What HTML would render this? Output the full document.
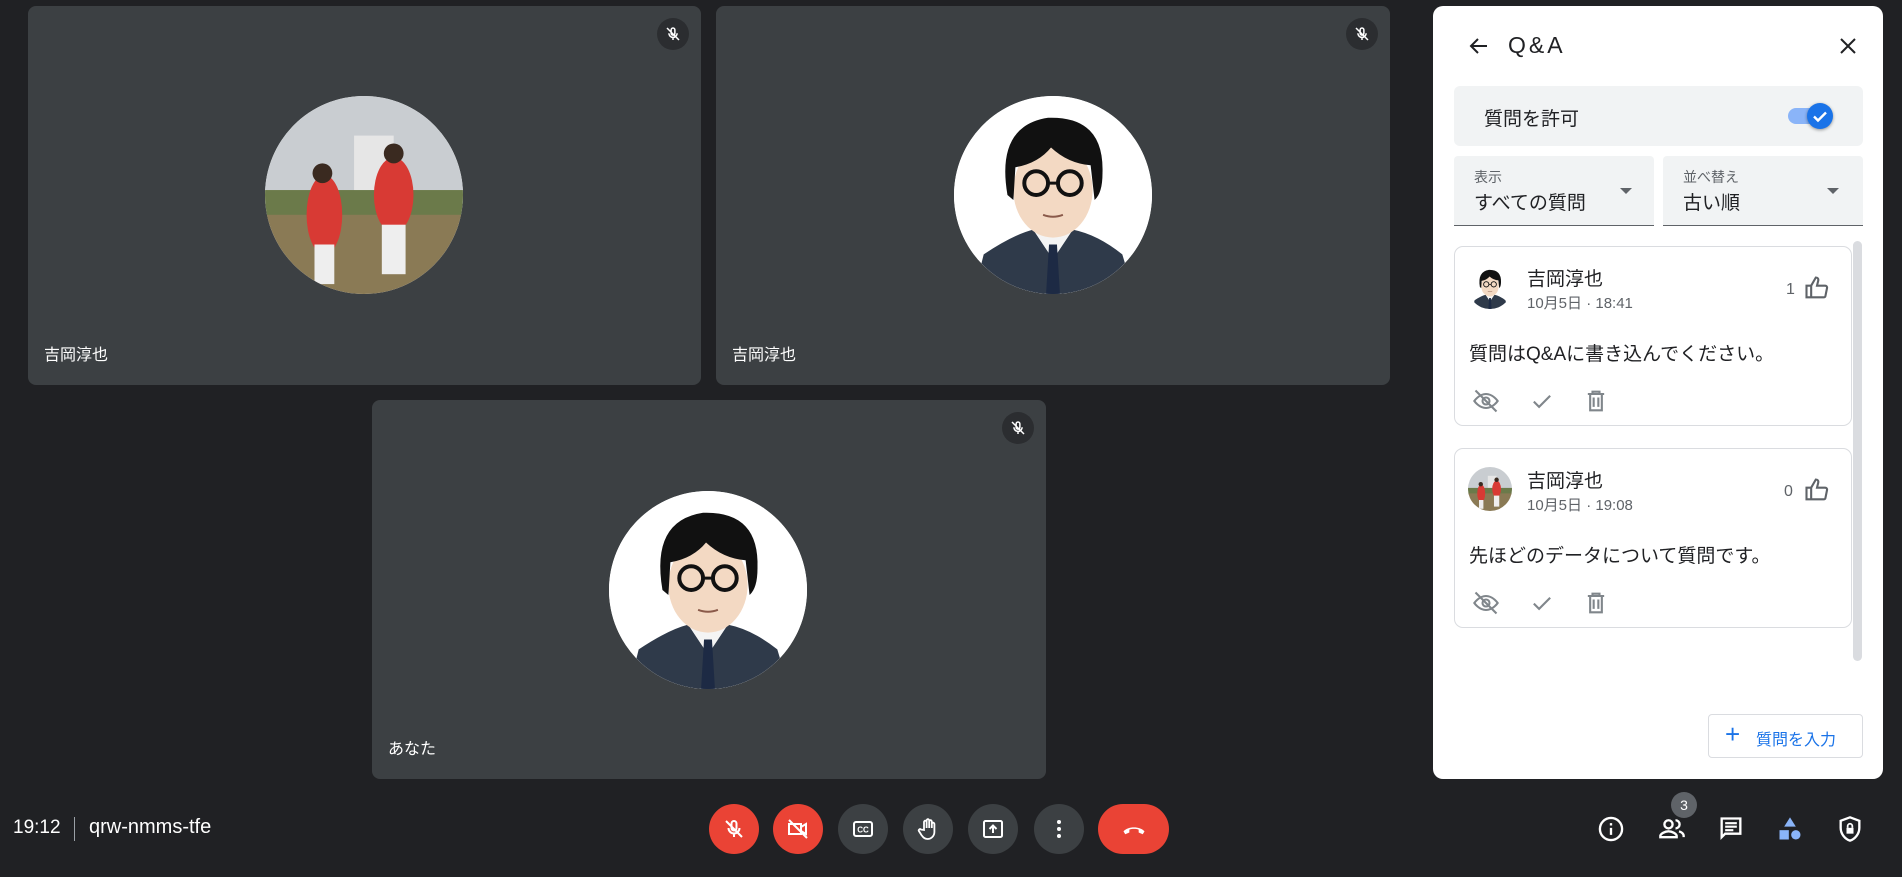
<!DOCTYPE html>
<html><head><meta charset="utf-8">
<style>
*{margin:0;padding:0;box-sizing:border-box}
body{width:1902px;height:877px;background:#202124;position:relative;overflow:hidden;font-family:"Liberation Sans","Noto Sans CJK JP",sans-serif;color:#202124}
.tile{position:absolute;background:#3c4043;border-radius:8px;overflow:hidden}
.tile .nm{position:absolute;left:16px;bottom:20px;color:#fff;font-size:16px}
.tile .mic{position:absolute;right:12px;top:12px;width:32px;height:32px;border-radius:50%;background:#2b2d30;display:flex;align-items:center;justify-content:center}
.av{position:absolute;width:198px;height:198px;border-radius:50%;overflow:hidden;background:#fff}
.panel{position:absolute;left:1433px;top:6px;width:450px;height:773px;background:#fff;border-radius:10px}
.abs{position:absolute}
.card{position:absolute;left:21px;width:398px;height:180px;border:1px solid #dadce0;border-radius:9px}
.btn{position:absolute;top:804px;width:50px;height:50px;border-radius:25px;background:#3c4043;display:flex;align-items:center;justify-content:center}
.red{background:#ea4335}
.ri{position:absolute;top:815px;width:28px;height:28px}
</style></head><body>

<svg width="0" height="0" style="position:absolute">
<defs>
<symbol id="man" viewBox="0 0 200 200">
<rect width="200" height="200" fill="#fff"/>
<path d="M20 200 L30 160 Q60 140 80 135 L100 165 L120 135 Q145 140 170 160 L182 200Z" fill="#2f3a4a"/>
<path d="M80 135 L100 165 L120 135 L112 128 L88 128Z" fill="#f4f4f4"/>
<path d="M96 150 L104 150 L107 200 L93 200Z" fill="#1d2a44"/>
<ellipse cx="100" cy="95" rx="40" ry="48" fill="#f3d9c3"/>
<path d="M54 100 Q42 30 95 22 Q152 20 150 78 Q150 98 142 105 L138 70 Q115 68 98 52 Q85 68 62 72 L60 105Z" fill="#111"/>
<circle cx="83" cy="88" r="12" fill="none" stroke="#111" stroke-width="4"/>
<circle cx="117" cy="88" r="12" fill="none" stroke="#111" stroke-width="4"/>
<path d="M95 88 L105 88" stroke="#111" stroke-width="3"/>
<path d="M90 120 Q100 124 110 120" stroke="#8a5a4a" stroke-width="2" fill="none"/>
</symbol>
<symbol id="soccer" viewBox="0 0 200 200">
<rect width="200" height="110" fill="#c9cdd1"/>
<rect x="90" y="40" width="40" height="60" fill="#e6e6e6"/>
<rect y="95" width="200" height="30" fill="#6b7a4a"/>
<rect y="120" width="200" height="80" fill="#8a7a55"/>
<ellipse cx="60" cy="120" rx="18" ry="40" fill="#d83a34"/>
<ellipse cx="130" cy="100" rx="20" ry="38" fill="#d83a34"/>
<rect x="50" y="150" width="20" height="40" fill="#eee"/>
<rect x="118" y="130" width="24" height="50" fill="#eee"/>
<circle cx="58" cy="78" r="10" fill="#3a2a20"/>
<circle cx="130" cy="58" r="10" fill="#3a2a20"/>
</symbol>
<symbol id="micoff" viewBox="0 0 24 24"><path fill="none" stroke="currentColor" stroke-width="2" d="M12 4a2.5 2.5 0 0 0-2.5 2.5V11a2.5 2.5 0 0 0 5 0V6.5A2.5 2.5 0 0 0 12 4zM6.5 11a5.5 5.5 0 0 0 11 0M12 16.5V20M4 4l16 16"/></symbol>
</defs></svg>

<div class="tile" style="left:28px;top:6px;width:673px;height:379px">
 <svg class="av" style="left:237px;top:90px" viewBox="0 0 200 200"><use href="#soccer"/></svg>
 <div class="nm">吉岡淳也</div>
 <div class="mic"><svg width="18" height="18" style="color:#fff"><use href="#micoff"/></svg></div>
</div>
<div class="tile" style="left:716px;top:6px;width:674px;height:379px">
 <svg class="av" style="left:238px;top:90px" viewBox="0 0 200 200"><use href="#man"/></svg>
 <div class="nm">吉岡淳也</div>
 <div class="mic"><svg width="18" height="18" style="color:#fff"><use href="#micoff"/></svg></div>
</div>
<div class="tile" style="left:372px;top:400px;width:674px;height:379px">
 <svg class="av" style="left:237px;top:91px" viewBox="0 0 200 200"><use href="#man"/></svg>
 <div class="nm">あなた</div>
 <div class="mic"><svg width="18" height="18" style="color:#fff"><use href="#micoff"/></svg></div>
</div>

<div class="panel">
 <svg class="abs" style="left:34px;top:28px" width="24" height="24" viewBox="0 0 24 24"><path d="M20 12H5M11 5l-7 7 7 7" fill="none" stroke="#202124" stroke-width="2"/></svg>
 <div class="abs" style="left:75px;top:26px;font-size:23px;letter-spacing:3px">Q&amp;A</div>
 <svg class="abs" style="left:403px;top:28px" width="24" height="24" viewBox="0 0 24 24"><path d="M5 5l14 14M19 5L5 19" stroke="#202124" stroke-width="2"/></svg>
 <div class="abs" style="left:21px;top:80px;width:409px;height:60px;background:#f1f3f4;border-radius:6px">
  <div class="abs" style="left:30px;top:18px;font-size:19px">質問を許可</div>
  <div class="abs" style="left:334px;top:22px;width:40px;height:16px;border-radius:8px;background:#8ab4f8"></div>
  <div class="abs" style="left:353px;top:17px;width:26px;height:26px;border-radius:50%;background:#1a73e8;box-shadow:0 1px 3px rgba(0,0,0,.4)">
   <svg width="26" height="26" viewBox="0 0 26 26"><path d="M7 13.5l4 4 8-8" fill="none" stroke="#fff" stroke-width="2.4"/></svg></div>
 </div>
 <div class="abs" style="left:21px;top:150px;width:200px;height:70px;background:#f1f3f4;border-radius:4px 4px 0 0;border-bottom:1px solid #5f6368">
  <div class="abs" style="left:20px;top:11px;font-size:14px;color:#5f6368">表示</div>
  <div class="abs" style="left:20px;top:32px;font-size:19px">すべての質問</div>
  <div class="abs" style="left:166px;top:32px;border:6px solid transparent;border-top:6px solid #5f6368"></div>
 </div>
 <div class="abs" style="left:230px;top:150px;width:200px;height:70px;background:#f1f3f4;border-radius:4px 4px 0 0;border-bottom:1px solid #5f6368">
  <div class="abs" style="left:20px;top:11px;font-size:14px;color:#5f6368">並べ替え</div>
  <div class="abs" style="left:20px;top:32px;font-size:19px">古い順</div>
  <div class="abs" style="left:164px;top:32px;border:6px solid transparent;border-top:6px solid #5f6368"></div>
 </div>
 <div class="abs" style="left:420px;top:235px;width:9px;height:420px;border-radius:5px;background:#dadce0"></div>

 <div class="card" style="top:240px">
  <svg class="abs" style="left:13px;top:18px;border-radius:50%" width="44" height="44" viewBox="0 0 200 200"><use href="#man"/></svg>
  <div class="abs" style="left:72px;top:17px;font-size:19px">吉岡淳也</div>
  <div class="abs" style="left:72px;top:45px;font-size:15px;color:#5f6368">10月5日 · 18:41</div>
  <div class="abs" style="left:331px;top:34px;font-size:16px;color:#5f6368">1</div>
  <svg class="abs" style="left:348px;top:27px" width="28" height="28" viewBox="0 0 24 24"><path d="M3 10h4v10H3zM7 10l4-7c1.5 0 2.5 1 2 3l-1 4h7c1 0 1.8.9 1.6 2l-1.4 7c-.2.6-.8 1-1.4 1H7" fill="none" stroke="#5f6368" stroke-width="1.8"/></svg>
  <div class="abs" style="left:14px;top:92px;font-size:19px">質問はQ&amp;Aに書き込んでください。</div>
  <svg class="abs" style="left:17px;top:140px" width="28" height="28" viewBox="0 0 24 24"><path d="M2 12s4-6 10-6 10 6 10 6-4 6-10 6S2 12 2 12zM12 9a3 3 0 1 0 0 6 3 3 0 0 0 0-6zM3 3l18 18" fill="none" stroke="#80868b" stroke-width="1.8"/></svg>
  <svg class="abs" style="left:73px;top:140px" width="28" height="28" viewBox="0 0 24 24"><path d="M5 12.5l4.5 4.5L19 7.5" fill="none" stroke="#80868b" stroke-width="1.8"/></svg>
  <svg class="abs" style="left:127px;top:140px" width="28" height="28" viewBox="0 0 24 24"><path d="M5 6h14M9 6V4h6v2M7 6v14h10V6M10 9v8M14 9v8" fill="none" stroke="#80868b" stroke-width="1.8"/></svg>
 </div>
 <div class="card" style="top:442px">
  <svg class="abs" style="left:13px;top:18px;border-radius:50%" width="44" height="44" viewBox="0 0 200 200"><use href="#soccer"/></svg>
  <div class="abs" style="left:72px;top:17px;font-size:19px">吉岡淳也</div>
  <div class="abs" style="left:72px;top:45px;font-size:15px;color:#5f6368">10月5日 · 19:08</div>
  <div class="abs" style="left:329px;top:34px;font-size:16px;color:#5f6368">0</div>
  <svg class="abs" style="left:348px;top:27px" width="28" height="28" viewBox="0 0 24 24"><path d="M3 10h4v10H3zM7 10l4-7c1.5 0 2.5 1 2 3l-1 4h7c1 0 1.8.9 1.6 2l-1.4 7c-.2.6-.8 1-1.4 1H7" fill="none" stroke="#5f6368" stroke-width="1.8"/></svg>
  <div class="abs" style="left:14px;top:92px;font-size:19px">先ほどのデータについて質問です。</div>
  <svg class="abs" style="left:17px;top:140px" width="28" height="28" viewBox="0 0 24 24"><path d="M2 12s4-6 10-6 10 6 10 6-4 6-10 6S2 12 2 12zM12 9a3 3 0 1 0 0 6 3 3 0 0 0 0-6zM3 3l18 18" fill="none" stroke="#80868b" stroke-width="1.8"/></svg>
  <svg class="abs" style="left:73px;top:140px" width="28" height="28" viewBox="0 0 24 24"><path d="M5 12.5l4.5 4.5L19 7.5" fill="none" stroke="#80868b" stroke-width="1.8"/></svg>
  <svg class="abs" style="left:127px;top:140px" width="28" height="28" viewBox="0 0 24 24"><path d="M5 6h14M9 6V4h6v2M7 6v14h10V6M10 9v8M14 9v8" fill="none" stroke="#80868b" stroke-width="1.8"/></svg>
 </div>

 <div class="abs" style="left:275px;top:708px;width:155px;height:44px;border:1px solid #dadce0;border-radius:4px;color:#1a73e8;font-size:16px">
  <span class="abs" style="left:16px;top:6px;font-size:26px;line-height:26px">+</span>
  <span class="abs" style="left:47px;top:11px">質問を入力</span>
 </div>
</div>

<div class="abs" style="left:13px;top:817px;color:#fff;font-size:19px">19:12</div>
<div class="abs" style="left:74px;top:817px;width:1px;height:24px;background:#9aa0a6"></div>
<div class="abs" style="left:89px;top:816px;color:#fff;font-size:20px">qrw-nmms-tfe</div>

<div class="btn red" style="left:709px"><svg width="24" height="24" style="color:#fff"><use href="#micoff"/></svg></div>
<div class="btn red" style="left:773px"><svg width="24" height="24" viewBox="0 0 24 24"><path d="M3 7h12v10H3zM15 10l5-3v10l-5-3M3 3l18 18" fill="none" stroke="#fff" stroke-width="2"/></svg></div>
<div class="btn" style="left:838px"><svg width="24" height="24" viewBox="0 0 24 24"><rect x="3" y="5" width="18" height="14" rx="2" fill="none" stroke="#fff" stroke-width="2"/><text x="12" y="15.5" font-size="8" font-weight="bold" text-anchor="middle" fill="#fff" font-family="Liberation Sans">CC</text></svg></div>
<div class="btn" style="left:903px"><svg width="24" height="24" viewBox="0 0 24 24"><path d="M8 13V5a1.3 1.3 0 0 1 2.6 0v6V3.5a1.3 1.3 0 0 1 2.6 0V11V4.5a1.3 1.3 0 0 1 2.6 0V11V7a1.3 1.3 0 0 1 2.6 0v8a7 7 0 0 1-7 7c-3 0-4.5-2-6-4l-2.5-4c-.7-1.2 1-2.5 2-1.5z" fill="none" stroke="#fff" stroke-width="1.8"/></svg></div>
<div class="btn" style="left:968px"><svg width="24" height="24" viewBox="0 0 24 24"><rect x="3" y="4" width="18" height="16" rx="1.5" fill="none" stroke="#fff" stroke-width="2"/><path d="M12 16V9M8.5 12L12 8.5 15.5 12" fill="none" stroke="#fff" stroke-width="2"/></svg></div>
<div class="btn" style="left:1034px"><svg width="24" height="24" viewBox="0 0 24 24"><circle cx="12" cy="5" r="2" fill="#fff"/><circle cx="12" cy="12" r="2" fill="#fff"/><circle cx="12" cy="19" r="2" fill="#fff"/></svg></div>
<div class="btn red" style="left:1098px;width:71px"><svg width="28" height="28" viewBox="0 0 24 24"><path d="M3 14c4-4.5 14-4.5 18 0l-1.5 2.5-3.5-1.5v-2.5c-2.5-.8-5.5-.8-8 0V15l-3.5 1.5z" fill="#fff"/></svg></div>

<svg class="ri" style="left:1597px" viewBox="0 0 24 24"><circle cx="12" cy="12" r="9.5" fill="none" stroke="#fff" stroke-width="2"/><path d="M12 11v6M12 7v2" stroke="#fff" stroke-width="2"/></svg>
<svg class="ri" style="left:1658px" viewBox="0 0 24 24"><circle cx="9" cy="8" r="3.5" fill="none" stroke="#fff" stroke-width="2"/><path d="M2 19v-1c0-2 4-4 7-4s7 2 7 4v1zM15 4.5a3.5 3.5 0 0 1 0 7M18 14c2 .5 4 2 4 4v1" fill="none" stroke="#fff" stroke-width="2"/></svg>
<div class="abs" style="left:1671px;top:792px;width:26px;height:26px;border-radius:13px;background:#5f6368;color:#fff;font-size:14px;text-align:center;line-height:26px">3</div>
<svg class="ri" style="left:1717px" viewBox="0 0 24 24"><path d="M4 3h16v13H7l-3 3z" fill="none" stroke="#fff" stroke-width="2"/><path d="M7 7h10M7 10h10M7 13h7" stroke="#fff" stroke-width="1.8"/></svg>
<svg class="ri" style="left:1776px" viewBox="0 0 24 24"><path d="M12 2l5 8H7z" fill="#8ab4f8"/><rect x="3" y="13" width="8" height="8" fill="#8ab4f8"/><circle cx="17" cy="17" r="4" fill="#8ab4f8"/></svg>
<svg class="ri" style="left:1836px" viewBox="0 0 24 24"><path d="M12 2l8 3v6c0 5-3.5 9.5-8 11-4.5-1.5-8-6-8-11V5z" fill="none" stroke="#fff" stroke-width="2"/><rect x="9" y="11" width="6" height="5" fill="#fff"/><path d="M10 11V9.5a2 2 0 0 1 4 0V11" fill="none" stroke="#fff" stroke-width="1.5"/></svg>

</body></html>
